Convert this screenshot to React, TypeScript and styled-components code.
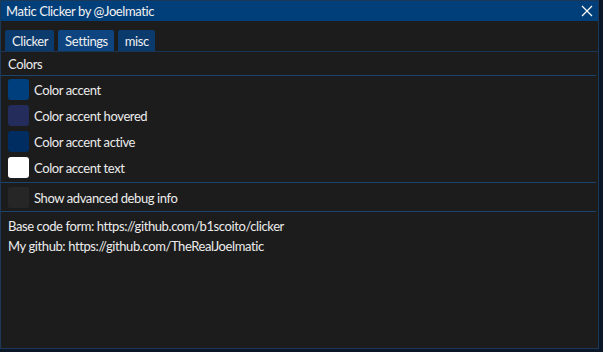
import React from "react";
import styled, { createGlobalStyle } from "styled-components";

const Global = createGlobalStyle`
  html, body { margin: 0; padding: 0; background: #0b1726; }
  body { font-family: Lato, "Noto Sans", sans-serif; font-size: 13px; letter-spacing: -0.4px; color: #ececec; }
  #root { width: 603px; height: 352px; }
`;

const Window = styled.div`
  width: 599px;
  height: 349px;
  box-sizing: border-box;
  border: 1px solid #1b3859;
  background: #1c1c1c;
  display: flex;
  flex-direction: column;
`;

const TitleBar = styled.div`
  height: 20px;
  background: #013f7a;
  display: flex;
  align-items: center;
  justify-content: space-between;
  padding: 0 5px 0 5px;
  flex-shrink: 0;
`;

const Title = styled.span`
  color: #f2f2f2;
`;

const Close = styled.button`
  background: none;
  border: none;
  padding: 0;
  width: 12px;
  height: 12px;
  display: flex;
  cursor: pointer;
`;

const Body = styled.div`
  padding: 8px 0 0 0;
  display: flex;
  flex-direction: column;
`;

const TabBar = styled.div`
  display: flex;
  gap: 4px;
  padding: 0 7px 0 4px;
  border-bottom: 1px solid #1a3453;
  height: 22px;
  align-items: flex-end;
`;

const Tab = styled.div<{ $active?: boolean }>`
  height: 21px;
  padding: 0 6px 0 7px;
  display: flex;
  align-items: center;
  background: ${(p) => (p.$active ? "#0e4580" : "#0b3a6c")};
  border-radius: 2px 2px 0 0;
  color: #f0f0f0;
`;

const HeaderRow = styled.div`
  height: 23px;
  display: flex;
  align-items: center;
  padding-left: 7px;
`;

const Separator = styled.div`
  height: 1px;
  background: #1b446d;
  margin: 0 2px 0 0;
`;

const List = styled.div`
  display: flex;
  flex-direction: column;
  gap: 5px;
  padding: 3px 0 4px 7px;
`;

const Row = styled.div`
  display: flex;
  align-items: center;
  gap: 5px;
  height: 21px;
`;

const Swatch = styled.div<{ $color: string }>`
  width: 21px;
  height: 21px;
  border-radius: 3px;
  background: ${(p) => p.$color};
`;

const Checkbox = styled.div`
  width: 21px;
  height: 21px;
  border-radius: 2px;
  background: #262626;
`;

const CheckArea = styled.div`
  padding: 4px 0 3px 7px;
`;

const Lines = styled.div`
  display: flex;
  flex-direction: column;
  gap: 4px;
  padding: 6px 0 0 7px;
`;

const Line = styled.div`
  height: 16px;
  line-height: 16px;
`;

const colors = [
  { name: "Color accent", color: "#003f7e" },
  { name: "Color accent hovered", color: "#232c5b" },
  { name: "Color accent active", color: "#002d61" },
  { name: "Color accent text", color: "#ffffff" },
];

export default function App() {
  return (
    <>
      <Global />
      <Window>
        <TitleBar>
          <Title>Matic Clicker by @Joelmatic</Title>
          <Close aria-label="close">
            <svg width="12" height="12" viewBox="0 0 12 12">
              <path d="M1 1 L11 11 M11 1 L1 11" stroke="#ffffff" strokeWidth="1.2" />
            </svg>
          </Close>
        </TitleBar>
        <Body>
          <TabBar>
            <Tab>Clicker</Tab>
            <Tab $active>Settings</Tab>
            <Tab>misc</Tab>
          </TabBar>
          <HeaderRow>Colors</HeaderRow>
          <Separator />
          <List>
            {colors.map((c) => (
              <Row key={c.name}>
                <Swatch $color={c.color} />
                <span>{c.name}</span>
              </Row>
            ))}
          </List>
          <Separator />
          <CheckArea>
            <Row>
              <Checkbox />
              <span>Show advanced debug info</span>
            </Row>
          </CheckArea>
          <Separator />
          <Lines>
            <Line>Base code form: https://github.com/b1scoito/clicker</Line>
            <Line>My github: https://github.com/TheRealJoelmatic</Line>
          </Lines>
        </Body>
      </Window>
    </>
  );
}
